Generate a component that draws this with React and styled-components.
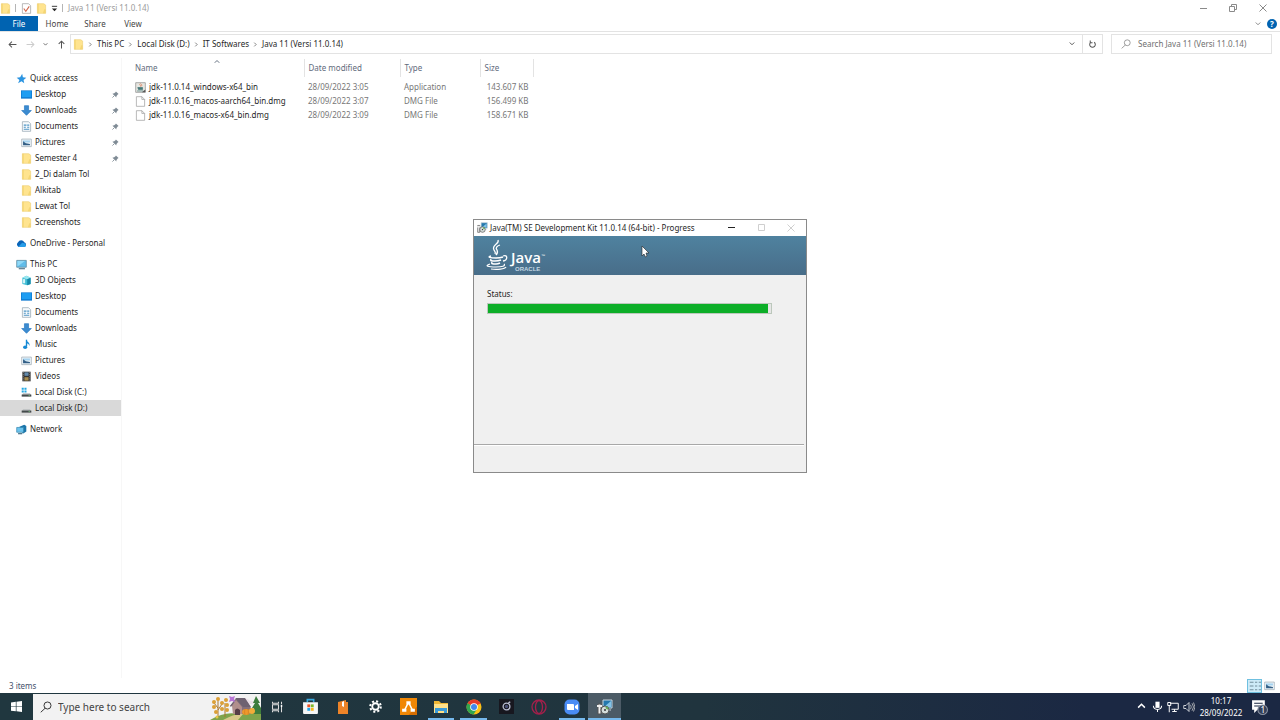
import React from 'react';
import styled, {createGlobalStyle, css} from "styled-components";

const Colors = {
	file: '#0063b1',
	line: '#e3e3e3',
	text: '#1f1f1f',
	muted: '#777777',
	header: '#5f6b7c',
	selected: '#d9d9d9',
}

const GlobalStyle = createGlobalStyle`
	* {
		box-sizing: border-box;
	}

	body {
		margin: 0;
		background: #fff;
		color: ${Colors.text};
		font: 8px/16px "Noto Sans", "Open Sans", sans-serif;
	}

	button, input {
		font: inherit;
		color: inherit;
		border: 0;
		padding: 0;
		margin: 0;
		background: none;
	}

	a {
		color: inherit;
		text-decoration: none;
	}

	svg {
		display: block;
		flex: none;
	}
`

const Page = styled.div`
	min-height: 100vh;
	display: flex;
	flex-direction: column;
`

const Desktop = styled.div`
	flex: 1;
	position: relative;
	display: flex;
	flex-direction: column;
`

const TitleBar = styled.header`
	height: 16px;
	padding-right: 2px;
	display: flex;
	align-items: center;
	justify-content: space-between;
`

const QuickTools = styled.div`
	display: flex;
	align-items: center;
	gap: 4px;
`

const Divider = styled.i`
	width: 1px;
	height: 8px;
	margin-right: 1px;
	background: #b5b5b5;
`

const WindowTitle = styled.h1`
	margin: 0;
	font-size: 8px;
	font-weight: 400;
	color: #9b9b9b;
`

const WindowButtons = styled.div`
	display: flex;
	align-items: center;

	button {
		width: 30px;
		height: 16px;
		display: grid;
		place-items: center;
		color: ${({$color}) => $color || '#8a8a8a'};
	}
`

const Ribbon = styled.nav`
	height: 16px;
	display: flex;
	align-items: stretch;
	border-bottom: 1px solid ${Colors.line};
`

const RibbonTab = styled.button`
	min-width: 38px;
	padding: 0 6px;
	line-height: 15px;
	color: #444;

	${({$file}) => $file && css`
		background: ${Colors.file};
		color: #fff;
	`}
`

const RibbonEnd = styled.div`
	margin-left: auto;
	padding-right: 3px;
	display: flex;
	align-items: center;
	gap: 6px;
	color: #888;
`

const HelpButton = styled.button`
	width: 10px;
	height: 10px;
	border-radius: 50%;
	background: ${Colors.file};
	color: #fff;
	font-weight: 700;
	line-height: 10px;
`

const AddressRow = styled.div`
	height: 26px;
	padding: 2px 8px 4px 4px;
	display: flex;
	align-items: center;
	gap: 8px;
`

const NavButtons = styled.div`
	width: 62px;
	display: flex;
	align-items: center;
	justify-content: space-between;
	padding: 0 0 0 4px;
	color: #555;

	button {
		display: grid;
		place-items: center;
	}
`

const AddressBox = styled.div`
	flex: 1;
	height: 20px;
	margin-left: -4px;
	display: flex;
	align-items: center;
	border: 1px solid ${Colors.line};
	padding-left: 2px;
`

const Crumb = styled.a`
	margin-left: 4px;
	display: flex;
	align-items: center;
	gap: 4px;
	white-space: nowrap;

	svg {
		color: #666;
	}
`

const AddressEnd = styled.div`
	margin-left: auto;
	display: flex;
	align-self: stretch;
	color: #555;

	button {
		width: 20px;
		display: grid;
		place-items: center;
	}

	button + button {
		border-left: 1px solid ${Colors.line};
	}
`

const SearchBox = styled.label`
	width: 161px;
	height: 20px;
	padding-left: 9px;
	display: flex;
	align-items: center;
	gap: 7px;
	border: 1px solid ${Colors.line};
	color: #8a8a8a;

	input {
		flex: 1;
		min-width: 0;
		outline: 0;
	}

	input::placeholder {
		color: #6f6f6f;
		opacity: 1;
	}
`

const Body = styled.div`
	flex: 1;
	display: flex;
`

const Sidebar = styled.nav`
	width: 122px;
	padding-top: 12px;
	border-right: 1px solid #f7f7f7;
`

const Tree = styled.ul`
	list-style: none;
	margin: 0 0 5px;
	padding: 0;
`

const TreeItem = styled.a`
	height: 16px;
	padding-left: ${({$root}) => $root ? 16 : 21}px;
	padding-right: 2px;
	display: flex;
	align-items: center;
	gap: 3px;
	white-space: nowrap;
	background: ${({$selected}) => $selected ? Colors.selected : 'none'};

	svg + span + svg {
		margin-left: auto;
	}
`

const Main = styled.main`
	flex: 1;
	padding: 1px 0 0 12px;
`

const FileTable = styled.table`
	border-collapse: collapse;
	table-layout: fixed;
	width: 400px;

	th {
		position: relative;
		height: 18px;
		padding: 0 0 0 4px;
		font-weight: 400;
		text-align: left;
		color: ${Colors.header};
		border-right: 1px solid ${Colors.line};
	}

	th:first-child {
		padding-left: 1px;
	}

	td {
		height: 14px;
		padding: 0 5px 0 4px;
		line-height: 14px;
		color: ${Colors.muted};
		white-space: nowrap;
	}

	td:first-child {
		padding: 0 1px;
		color: ${Colors.text};
	}

	td:last-child {
		text-align: right;
	}

	tbody::before {
		content: "";
		display: block;
		height: 3px;
	}
`

const SortMark = styled.span`
	position: absolute;
	top: 0;
	left: 50%;
	margin-left: -5px;
`

const FileName = styled.span`
	display: flex;
	align-items: center;
	gap: 3px;
`

const StatusBar = styled.footer`
	height: 15px;
	padding: 0 4px 0 9px;
	display: flex;
	align-items: center;
	justify-content: space-between;
	color: #44506a;
`

const ViewButtons = styled.div`
	display: flex;

	button {
		width: 14px;
		height: 14px;
		display: grid;
		place-items: center;
	}

	button:first-child {
		width: 15px;
		background: #cdebf8;
		border: 1px solid #6fc0e0;
	}
`

const DialogLayer = styled.div`
	position: absolute;
	inset: 0;
	padding-bottom: 2px;
	display: grid;
	place-items: center;
	pointer-events: none;
`

const Dialog = styled.section`
	width: 334px;
	min-height: 254px;
	display: flex;
	flex-direction: column;
	background: #f0f0f0;
	border: 1px solid #8a8a8a;
	pointer-events: auto;
`

const DialogTitle = styled.header`
	height: 16px;
	padding-left: 3px;
	display: flex;
	align-items: center;
	gap: 2px;
	background: #fff;

	h2 {
		flex: 1;
		margin: 0;
		font-size: 8px;
		font-weight: 400;
	}

	button:not(:first-child) {
		color: #cfcfcf;
	}
`

const Banner = styled.div`
	height: 39px;
	padding: 3px 0 0 12px;
	display: flex;
	color: #fff;
	background: linear-gradient(#4f829f, #486d89);
`

const Wordmark = styled.div`
	display: flex;
	flex-direction: column;
	margin: 9px 0 0 1px;
	font: 600 15px/18px "Open Sans", sans-serif;

	small {
		font: 700 6px/6px "Liberation Sans", sans-serif;
		padding-left: 4px;
		color: #c4d7e2;
	}

	sup {
		font: 4px/4px "Liberation Sans", sans-serif;
		vertical-align: 6px;
	}
`

const Install = styled.div`
	flex: 1;
	padding: 14px 34px 0 13px;

	label {
		display: block;
		margin-bottom: 4px;
		line-height: 10px;
	}
`

const Progress = styled.progress`
	appearance: none;
	display: block;
	width: 100%;
	height: 11px;
	border: 1px solid #bcc8bc;

	&::-webkit-progress-bar {
		background: #e6e6e6;
	}

	&::-webkit-progress-value {
		background: #0cae28;
	}
`

const DialogFooter = styled.footer`
	height: 28px;
	margin-right: 2px;
	border-top: 1px solid #a8a8a8;
	box-shadow: inset 0 1px #fff;
`

const Pointer = styled.svg`
	position: absolute;
	left: calc(50% + 1px);
	top: calc(50% - 102px);
`

const Taskbar = styled.footer`
	height: 27px;
	display: flex;
	align-items: stretch;
	color: #fff;
	background: linear-gradient(90deg, #20373f, #20343e 55%, #1b2843 85%);
`

const TaskButton = styled.button`
	width: 33px;
	display: grid;
	place-items: center;
	background: ${({$active}) => $active ? '#4c5b66' : 'none'};

	${({$running, $active}) => $running && css`
		position: relative;

		&::after {
			content: "";
			position: absolute;
			bottom: 0;
			left: ${$active ? 0 : 3}px;
			right: ${$active ? 0 : 3}px;
			height: 2px;
			background: #76b9ed;
		}
	`}
`

const TaskSearch = styled.label`
	width: 228px;
	margin-top: 1px;
	padding-left: 7px;
	display: flex;
	align-items: center;
	gap: 6px;
	background: #f2f2f2;
	color: #333;
	font-size: 10px;

	input {
		flex: 1;
		min-width: 0;
		outline: 0;
	}

	input::placeholder {
		color: #444;
		opacity: 1;
	}
`

const TaskApps = styled.div`
	width: 360px;
	display: flex;

	button {
		flex: 1;
	}
`

const Tray = styled.div`
	margin-left: auto;
	padding-right: 13px;
	display: flex;
	align-items: center;

	button {
		width: 16px;
		display: grid;
		place-items: center;
	}
`

const Clock = styled.time`
	width: 48px;
	margin-right: 6px;
	text-align: center;
	line-height: 12px;
`

/* small drawings, all on a 16 unit grid unless noted */

const Icon = ({size = 11, box = 16, children, ...rest}) => (
	<svg width={size} height={size} viewBox={`0 0 ${box} ${box}`} fill="none" aria-hidden="true" {...rest}>{children}</svg>
)

const FolderIcon = () => (
	<Icon>
		<path d="M2 1h10l2 2v12H2z" fill="#ffe48f"/>
		<path d="M2 1h2v14H2zM12 9h2v6h-4z" fill="#f5d673"/>
		<path d="M2 1h9l3 2v12H2z" stroke="#efd27c"/>
	</Icon>
)

const CheckPageIcon = () => (
	<Icon>
		<path d="M2 1h9l3 3v11H2z" fill="#fff" stroke="#999"/>
		<path d="M4 8l3 4 5-7" stroke="#d0664c" strokeWidth="1.6"/>
	</Icon>
)

const StarIcon = () => (
	<Icon><path d="M9 1l1 5 5 1-4 3 1 5-4-3-5 3 2-5-4-3 5-1z" fill="#2b94e1"/></Icon>
)

const MonitorIcon = () => (
	<Icon>
		<path d="M0 2h16v12H0z" fill="#0d78d0"/>
		<path d="M1 3h14v9H1z" fill="#1e9df2"/>
	</Icon>
)

const DownIcon = () => (
	<Icon><path d="M5 1h6v7h4l-7 7-7-7h4z" fill="#3b8bd0" stroke="#2879c2"/></Icon>
)

const DocumentIcon = () => (
	<Icon>
		<path d="M2 1h9l3 3v11H2z" fill="#f7fafc" stroke="#8fa1ae"/>
		<path d="M4 6h4M4 9h3M4 12h8M9 9h3M9 6h3" stroke="#4d94c4" strokeWidth="1.5"/>
	</Icon>
)

const PictureIcon = () => (
	<Icon>
		<path d="M1 3h14v11H1z" fill="#eef5fa" stroke="#9aa7b0"/>
		<path d="M3 5h10v3H3z" fill="#a5d2ef"/>
		<path d="M3 12V6l4 3 6 1v2z" fill="#335f86"/>
	</Icon>
)

const CloudIcon = () => (
	<Icon>
		<path d="M4 13a4 4 0 0 1-1-7 5 5 0 0 1 9 0 4 4 0 0 1 1 7z" fill="#0a64b8"/>
		<path d="M3 13l6-6 4 1a3 3 0 0 1 0 5z" fill="#279de8"/>
	</Icon>
)

const ComputerIcon = () => (
	<Icon>
		<path d="M1 2h14v10H1z" fill="#62bdea" stroke="#578196"/>
		<path d="M2 11l11-8H2z" fill="#90d9f7"/>
		<path d="M4 14h9" stroke="#688697" strokeWidth="2"/>
	</Icon>
)

const CubeIcon = () => (
	<Icon>
		<path d="M2 4l6-3 6 3v9l-5 2-7-2z" fill="#41bdd5"/>
		<path d="M2 4l7 2 5-2-6-3z" fill="#9be7ef"/>
		<path d="M9 6l5-2v9l-5 2z" fill="#1688a9"/>
		<path d="M3 6h3v6H3z" fill="#d9f5f7"/>
	</Icon>
)

const MusicIcon = () => (
	<Icon>
		<path d="M8 1v10" stroke="#1488d4" strokeWidth="2"/>
		<path d="M8 1c1 4 6 4 4 9 0-3-3-4-4-4z" fill="#1488d4"/>
		<ellipse cx="6" cy="12" rx="3" ry="2.5" fill="#1488d4"/>
	</Icon>
)

const VideoIcon = () => (
	<Icon>
		<path d="M2 1h12v14H2z" fill="#333"/>
		<path d="M5 2h6v5H5z" fill="#638aac"/>
		<path d="M5 9h6v5H5z" fill="#a98d4e"/>
		<path d="M3.5 2v13M12.5 2v13" stroke="#ccc" strokeDasharray="1 2"/>
	</Icon>
)

const DiskIcon = ({system}) => (
	<Icon>
		{system && <path d="M1 1h3v3H1zM5 1h3v3H5zM1 5h3v3H1zM5 5h3v3H5z" fill="#22a9e4"/>}
		<path d="M3 9h10l2 3H1z" fill="#b9bdbe"/>
		<path d="M1 11h14v3H1z" fill="#454b4c"/>
		<path d="M11 12.5h2" stroke="#7ad583"/>
	</Icon>
)

const NetworkIcon = () => (
	<Icon>
		<path d="M5 4l7-3 3 2v8l-5 3z" fill="#1b75aa"/>
		<path d="M1 5h10v7H1z" fill="#6bc3ee" stroke="#3586ae"/>
		<path d="M3 14h6" stroke="#527a90" strokeWidth="2"/>
	</Icon>
)

const PinIcon = () => (
	<Icon size={7}>
		<path d="M9 1l6 6-2 1-3 4v3L1 6l4-1 3-2z" fill="#7f8b95"/>
		<path d="M5 11l-4 4" stroke="#7f8b95" strokeWidth="2"/>
	</Icon>
)

const PageIcon = () => (
	<Icon><path d="M2 1h8l4 4v10H2zM10 1v4h4" fill="#fff" stroke="#999"/></Icon>
)

const JavaFileIcon = () => (
	<Icon>
		<path d="M1 1h14v14H1z" fill="#e8e8e3" stroke="#888"/>
		<path d="M8 2c-3 3 2 3 0 5M10 3c-1 1 0 2 0 3" stroke="#d56539"/>
		<path d="M4 8h7v3H5zM3 13h9" fill="#477" stroke="#477"/>
		<path d="M10 15l5-4v4z" fill="#555"/>
	</Icon>
)

const InstallerIcon = ({size}) => (
	<Icon size={size}>
		<path d="M6 1h9v8H6z" fill="#2478ae" stroke="#c7d4dc"/>
		<path d="M7 8l7-6v6z" fill="#83c4e8"/>
		<path d="M11 9v2h3" stroke="#c7d4dc"/>
		<path d="M1 5h3v10H1z" fill="#eee" stroke="#555"/>
		<path d="M0 7h5" stroke="#eee" strokeWidth="2"/>
		<circle cx="8" cy="11" r="4" fill="#d5ddda" stroke="#555"/>
		<circle cx="8" cy="11" r="1" fill="#333"/>
		<path d="M9 8l2 2" stroke="#65ae5b" strokeWidth="2"/>
	</Icon>
)

const Chevron = ({d, size = 6}) => (
	<Icon size={size} box={8}><path d={d} stroke="currentColor" strokeWidth="1.3"/></Icon>
)
const right = 'M2 1l3 3-3 3'
const down = 'M1 2l3 3 3-3'
const up = 'M1 5l3-3 3 3'

const Glass = ({size = 10}) => (
	<Icon size={size}>
		<circle cx="10" cy="6" r="4.7" stroke="currentColor" strokeWidth="1.3"/>
		<path d="M7 9.5L1 15" stroke="currentColor" strokeWidth="1.3"/>
	</Icon>
)

const Arrow = ({turn = 0, color = 'currentColor'}) => (
	<Icon size={9}><path d="M15 8H2M7 3L2 8l5 5" stroke={color} strokeWidth="1.8" transform={`rotate(${turn} 8 8)`}/></Icon>
)

const MinIcon = () => <Icon size={7} box={7}><path d="M0 3.5h7" stroke="currentColor"/></Icon>
const MaxIcon = () => <Icon size={7} box={7}><path d="M.5.5h6v6h-6z" stroke="currentColor"/></Icon>
const RestoreIcon = () => <Icon size={8} box={8}><path d="M.5 2.5h5v5h-5zM2.5 2V.5h5v5H6" stroke="currentColor"/></Icon>
const CloseIcon = () => <Icon size={8} box={8}><path d="M.5.5l7 7M7.5.5l-7 7" stroke="currentColor"/></Icon>

const JavaCup = () => (
	<svg width="24" height="34" viewBox="0 0 24 34" fill="none" stroke="#fff" aria-hidden="true">
		<path d="M12 1c2 4-7 5-4 10 1 2 2 2 1 4M14 6c-3 1-5 3-3 5 1 2 1 3-1 5" strokeWidth="1.3"/>
		<path d="M5 17c-4 1-1 2 5 2 4 0 7-1 7-1M5 20c-1 2 1 2 4 2 3 0 6-1 6-1M6 23c-1 2 1 2 4 2 2 0 4-1 4-1" strokeWidth="1.5"/>
		<path d="M17 17c5-2 5 4 0 5" strokeWidth="1.3"/>
		<path d="M4 25c-6 2-2 3 6 3 6 0 10-1 8-3M5 30c6 1 14 0 15-2" strokeWidth="1.2"/>
	</svg>
)

const Landscape = () => (
	<svg width="51" height="26" viewBox="0 0 51 26" aria-hidden="true">
		<path d="M26 8q3-5 6-1 4-5 8 0 3-1 4 3H26z" fill="#eadfe6"/>
		<path d="M0 26q15-9 28-6l23-2v8z" fill="#7fa44b"/>
		<path d="M13 26q12-7 20-6l-5 6z" fill="#d8c789"/>
		<path d="M8 23V4M15 23V9M8 14L4 9M8 16l4-6" stroke="#a8762f" fill="none"/>
		<g fill="#dba038">
			<circle cx="8" cy="5" r="2"/><circle cx="4" cy="8" r="2"/><circle cx="12" cy="9" r="2"/>
			<circle cx="4" cy="13" r="2"/><circle cx="16" cy="6" r="2"/><circle cx="17" cy="11" r="2"/>
			<circle cx="12" cy="15" r="2"/><circle cx="6" cy="18" r="2"/><circle cx="17" cy="16" r="2"/>
		</g>
		<path d="M20 12l6-7h9l6 9v6H23v-8z" fill="#85707b"/>
		<path d="M22 12l4-6 6 7v7h-9z" fill="#b18f8c"/>
		<path d="M20 12l6-8h9l6 9h-8l-7-8-5 8z" fill="#6e6271"/>
		<path d="M25 21v-5q2-3 5 0v5z" fill="#563d47"/>
		<path d="M46 2l4 7h-2l3 5v6H41l3-6h-2l3-5h-2z" fill="#3d7d3d"/>
		<ellipse cx="36" cy="18" rx="4" ry="3" fill="#ed982b"/>
		<ellipse cx="42" cy="17" rx="3" ry="3" fill="#f1ad39"/>
		<path d="M35 15q-1 3 0 6M38 15q1 3 0 6" stroke="#cf7a22" strokeWidth=".6" fill="none"/>
		<path d="M19 2l3 1 3-1-1 3 1 3-3-1-3 1 1-3z" fill="#b875d6"/>
		<circle cx="7" cy="23" r="1.5" fill="#e6c646"/>
	</svg>
)

const apps = [
	{name: 'Task View', icon: (
		<Icon size={12}><path d="M2 1v2h8V1M2 15v-2h8v2M2 5h8v6H2zM14 1v3M14 8v7" stroke="#ddd" strokeWidth="1.4"/><path d="M13 5h2v3h-2z" fill="#fff"/></Icon>
	)},
	{name: 'Microsoft Store', icon: (
		<Icon size={17}>
			<path d="M5 4V1.5h6V4" stroke="#38a9df" strokeWidth="1.5"/>
			<path d="M1 4h14v10q0 1-1 1H2q-1 0-1-1z" fill="#f6f6f6"/>
			<path d="M5 6h2.7v2.7H5z" fill="#f05123"/><path d="M8.3 6H11v2.7H8.3z" fill="#7db928"/>
			<path d="M5 9.3h2.7V12H5z" fill="#20a4e9"/><path d="M8.3 9.3H11V12H8.3z" fill="#fbb61b"/>
		</Icon>
	)},
	{name: 'Books', icon: (
		<Icon size={16}><path d="M3 3l8-2v2h2v12H3z" fill="#ee8428"/><path d="M7 3l2-1v6l-2-1z" fill="#fff"/></Icon>
	)},
	{name: 'Settings', icon: (
		<Icon size={13}>
			<circle cx="8" cy="8" r="4" stroke="#fff" strokeWidth="2.2"/>
			<circle cx="8" cy="8" r="6.5" stroke="#fff" strokeWidth="2.5" strokeDasharray="2.55 2.55"/>
		</Icon>
	)},
	{name: 'Diagrams', icon: (
		<Icon size={17}>
			<path d="M0 0h16v16H0z" fill="#f08705"/><path d="M8 16l8-8v8z" fill="#d66e02"/>
			<path d="M8 4l-4 8M8 4l4 8" stroke="#fff" strokeWidth="1.5"/>
			<path d="M6 3h4v3H6zM2 10h4v3H2zM10 10h4v3h-4z" fill="#fff"/>
		</Icon>
	)},
	{name: 'File Explorer', running: true, icon: (
		<Icon size={16}>
			<path d="M1 2h5l2 2h7v10H1z" fill="#f0b735"/><path d="M1 5h14v9H1z" fill="#ffe18a"/>
			<path d="M2 9h12v5h-3v-2H5v2H2z" fill="#3b9bd8"/>
		</Icon>
	)},
	{name: 'Chrome', running: true, icon: (
		<Icon size={16}>
			<circle cx="8" cy="8" r="7.5" fill="#fbc116"/>
			<path d="M8 8L1.500 4.200A7.500 7.500 0 0 1 14.500 4.200z" fill="#e53a2c"/>
			<path d="M8 8L1.500 4.200A7.500 7.500 0 0 0 7.500 15.500L11.200 9.800z" fill="#31a650"/>
			<path d="M8 4.200h6.500" stroke="#e53a2c"/>
			<circle cx="8" cy="8" r="3.8" fill="#fff"/><circle cx="8" cy="8" r="3" fill="#4286ee"/>
		</Icon>
	)},
	{name: 'Recorder', icon: (
		<Icon size={15}>
			<path d="M0 0h16v16H0z" fill="#17171f"/>
			<circle cx="8" cy="8" r="3.6" stroke="#b9bdd2" strokeWidth="1.4"/>
			<circle cx="8" cy="8" r="1.8" fill="#4b5078"/>
			<path d="M10 4l2-1" stroke="#c8cbdf" strokeWidth="1.4"/>
		</Icon>
	)},
	{name: 'Opera GX', icon: (
		<Icon size={16}><circle cx="8" cy="8" r="7" stroke="#a3204b" strokeWidth="1.3"/><ellipse cx="8" cy="8" rx="3.5" ry="6.5" stroke="#a3204b" strokeWidth="1.3"/></Icon>
	)},
	{name: 'Zoom', running: true, icon: (
		<Icon size={16}>
			<rect x=".5" y=".5" width="15" height="15" rx="5" fill="#4a8cf5"/>
			<path d="M3 5h6q1 0 1 1v5H4q-1 0-1-1zM11 7l3-2v6l-3-2z" fill="#fff"/>
		</Icon>
	)},
	{name: 'Java Setup', active: true, running: true, icon: <InstallerIcon size={16}/>},
]

const quickAccess = [
	['Desktop', <MonitorIcon/>, true],
	['Downloads', <DownIcon/>, true],
	['Documents', <DocumentIcon/>, true],
	['Pictures', <PictureIcon/>, true],
	['Semester 4', <FolderIcon/>, true],
	['2_Di dalam Tol', <FolderIcon/>],
	['Alkitab', <FolderIcon/>],
	['Lewat Tol', <FolderIcon/>],
	['Screenshots', <FolderIcon/>],
]

const thisPc = [
	['3D Objects', <CubeIcon/>],
	['Desktop', <MonitorIcon/>],
	['Documents', <DocumentIcon/>],
	['Downloads', <DownIcon/>],
	['Music', <MusicIcon/>],
	['Pictures', <PictureIcon/>],
	['Videos', <VideoIcon/>],
	['Local Disk (C:)', <DiskIcon system/>],
	['Local Disk (D:)', <DiskIcon/>],
]

const files = [
	['jdk-11.0.14_windows-x64_bin', '28/09/2022 3:05', 'Application', '143.607 KB'],
	['jdk-11.0.16_macos-aarch64_bin.dmg', '28/09/2022 3:07', 'DMG File', '156.499 KB'],
	['jdk-11.0.16_macos-x64_bin.dmg', '28/09/2022 3:09', 'DMG File', '158.671 KB'],
]

const crumbs = ['This PC', 'Local Disk (D:)', 'IT Softwares', 'Java 11 (Versi 11.0.14)']

const Branch = ({name, icon, items = []}) => (
	<Tree>
		<li><TreeItem href="#" $root>{icon}<span>{name}</span></TreeItem></li>
		{items.map(([label, itemIcon, pinned]) => (
			<li key={label}>
				<TreeItem href="#" $selected={label === 'Local Disk (D:)'}>
					{itemIcon}
					<span>{label}</span>
					{pinned && <PinIcon/>}
				</TreeItem>
			</li>
		))}
	</Tree>
)

const Column = styled.col`
	width: ${({$width}) => $width}px;
`

const Files = () => (
	<FileTable>
		<colgroup>
			<Column $width={170}/>
			<Column $width={96}/>
			<Column $width={80}/>
			<col/>
		</colgroup>
		<thead>
			<tr>
				<th>Name<SortMark><Chevron d={up}/></SortMark></th>
				<th>Date modified</th>
				<th>Type</th>
				<th>Size</th>
			</tr>
		</thead>
		<tbody>
			{files.map(([name, date, type, size]) => (
				<tr key={name}>
					<td><FileName>{type === 'Application' ? <JavaFileIcon/> : <PageIcon/>}{name}</FileName></td>
					<td>{date}</td>
					<td>{type}</td>
					<td>{size}</td>
				</tr>
			))}
		</tbody>
	</FileTable>
)

const Setup = () => (
	<DialogLayer>
		<Dialog>
			<DialogTitle>
				<InstallerIcon size={11}/>
				<h2>Java(TM) SE Development Kit 11.0.14 (64-bit) - Progress</h2>
				<WindowButtons $color="#222">
					<button aria-label="Minimize"><MinIcon/></button>
					<button aria-label="Maximize"><MaxIcon/></button>
					<button aria-label="Close"><CloseIcon/></button>
				</WindowButtons>
			</DialogTitle>
			<Banner>
				<JavaCup/>
				<Wordmark><span>Java<sup>™</sup></span><small>ORACLE</small></Wordmark>
			</Banner>
			<Install>
				<label htmlFor="status">Status:</label>
				<Progress id="status" value={99} max={100}/>
			</Install>
			<DialogFooter/>
		</Dialog>
		<Pointer width="9" height="13" viewBox="0 0 9 13" aria-hidden="true">
			<path d="M1 1v10l2-2 1.500 3 1.500-1L5 8h3z" fill="#fff" stroke="#222" strokeWidth=".6"/>
		</Pointer>
	</DialogLayer>
)

const App = () => {
	return (
		<Page>
			<GlobalStyle/>
			<Desktop>
				<TitleBar>
					<QuickTools>
						<FolderIcon/>
						<Divider/>
						<CheckPageIcon/>
						<FolderIcon/>
						<Icon size={7} box={8}><path d="M1 1.500h6" stroke="#222"/><path d="M1 4h6L4 7z" fill="#222"/></Icon>
						<Divider/>
						<WindowTitle>Java 11 (Versi 11.0.14)</WindowTitle>
					</QuickTools>
					<WindowButtons>
						<button aria-label="Minimize"><MinIcon/></button>
						<button aria-label="Restore"><RestoreIcon/></button>
						<button aria-label="Close"><CloseIcon/></button>
					</WindowButtons>
				</TitleBar>
				<Ribbon>
					<RibbonTab $file>File</RibbonTab>
					<RibbonTab>Home</RibbonTab>
					<RibbonTab>Share</RibbonTab>
					<RibbonTab>View</RibbonTab>
					<RibbonEnd>
						<Chevron d={down}/>
						<HelpButton>?</HelpButton>
					</RibbonEnd>
				</Ribbon>
				<AddressRow>
					<NavButtons>
						<button aria-label="Back"><Arrow/></button>
						<button aria-label="Forward"><Arrow turn={180} color="#ccc"/></button>
						<button aria-label="Recent"><Chevron d={down} size={5}/></button>
						<button aria-label="Up"><Arrow turn={90}/></button>
					</NavButtons>
					<AddressBox>
						<FolderIcon/>
						{crumbs.map(crumb => (
							<Crumb href="#" key={crumb}><Chevron d={right} size={5}/>{crumb}</Crumb>
						))}
						<AddressEnd>
							<button aria-label="History"><Chevron d={down}/></button>
							<button aria-label="Refresh">
								<Icon size={9}><path d="M5 4a5 5 0 1 0 6 0M4 1v4h4" stroke="currentColor" strokeWidth="1.8"/></Icon>
							</button>
						</AddressEnd>
					</AddressBox>
					<SearchBox>
						<Glass/>
						<input aria-label="Search folder" placeholder="Search Java 11 (Versi 11.0.14)"/>
					</SearchBox>
				</AddressRow>
				<Body>
					<Sidebar>
						<Branch name="Quick access" icon={<StarIcon/>} items={quickAccess}/>
						<Branch name="OneDrive - Personal" icon={<CloudIcon/>}/>
						<Branch name="This PC" icon={<ComputerIcon/>} items={thisPc}/>
						<Branch name="Network" icon={<NetworkIcon/>}/>
					</Sidebar>
					<Main>
						<Files/>
					</Main>
				</Body>
				<StatusBar>
					<span>3 items</span>
					<ViewButtons>
						<button aria-label="Details">
							<Icon size={12}><path d="M1 3h5M1 8h5M1 13h5M8 3h3M8 8h3M8 13h3M13 3h3M13 8h3M13 13h3" stroke="#56727f"/></Icon>
						</button>
						<button aria-label="Large icons"><PictureIcon/></button>
					</ViewButtons>
				</StatusBar>
				<Setup/>
			</Desktop>
			<Taskbar>
				<TaskButton aria-label="Start">
					<Icon size={11}><path d="M0 2l7-1v6.500H0zM8 1l8-1v7.500H8zM0 8.500h7V15l-7-1zM8 8.500h8V16l-8-1z" fill="#fff"/></Icon>
				</TaskButton>
				<TaskSearch>
					<Glass size={12}/>
					<input aria-label="Search" placeholder="Type here to search"/>
					<Landscape/>
				</TaskSearch>
				<TaskApps>
					{apps.map(({name, icon, running, active}) => (
						<TaskButton key={name} aria-label={name} $running={running} $active={active}>{icon}</TaskButton>
					))}
				</TaskApps>
				<Tray>
					<button aria-label="Hidden icons"><Chevron d={up} size={9}/></button>
					<button aria-label="Microphone">
						<Icon><path d="M5 1h6v9H5z" fill="#fff"/><path d="M2 7c0 7 12 7 12 0M8 12v4" stroke="#fff" strokeWidth="1.5"/></Icon>
					</button>
					<button aria-label="Network">
						<Icon size={12}><path d="M4 3h11v8H6M10 11v3M7 14h6M1 2h4v4H1zM3 6v9" stroke="#fff" strokeWidth="1.3"/></Icon>
					</button>
					<button aria-label="Volume">
						<Icon size={12}><path d="M1 6h3l4-4v12l-4-4H1z" stroke="#fff"/><path d="M10 5q2 3 0 6M12 3q4 5 0 10M14 2q4 6 0 12" stroke="#ccc"/></Icon>
					</button>
					<Clock>10:17<br/>28/09/2022</Clock>
					<button aria-label="Notifications">
						<Icon size={17}>
							<path d="M1 2h12v9H6l-3 3v-3H1z" fill="#fff"/><path d="M3 5h8M3 7.500h6" stroke="#1b2843"/>
							<circle cx="11" cy="11" r="4.500" fill="#35415a" stroke="#8c94a3"/>
							<text x="9" y="14" fill="#fff" fontSize="8">1</text>
						</Icon>
					</button>
				</Tray>
			</Taskbar>
		</Page>
	)
}


export default App
